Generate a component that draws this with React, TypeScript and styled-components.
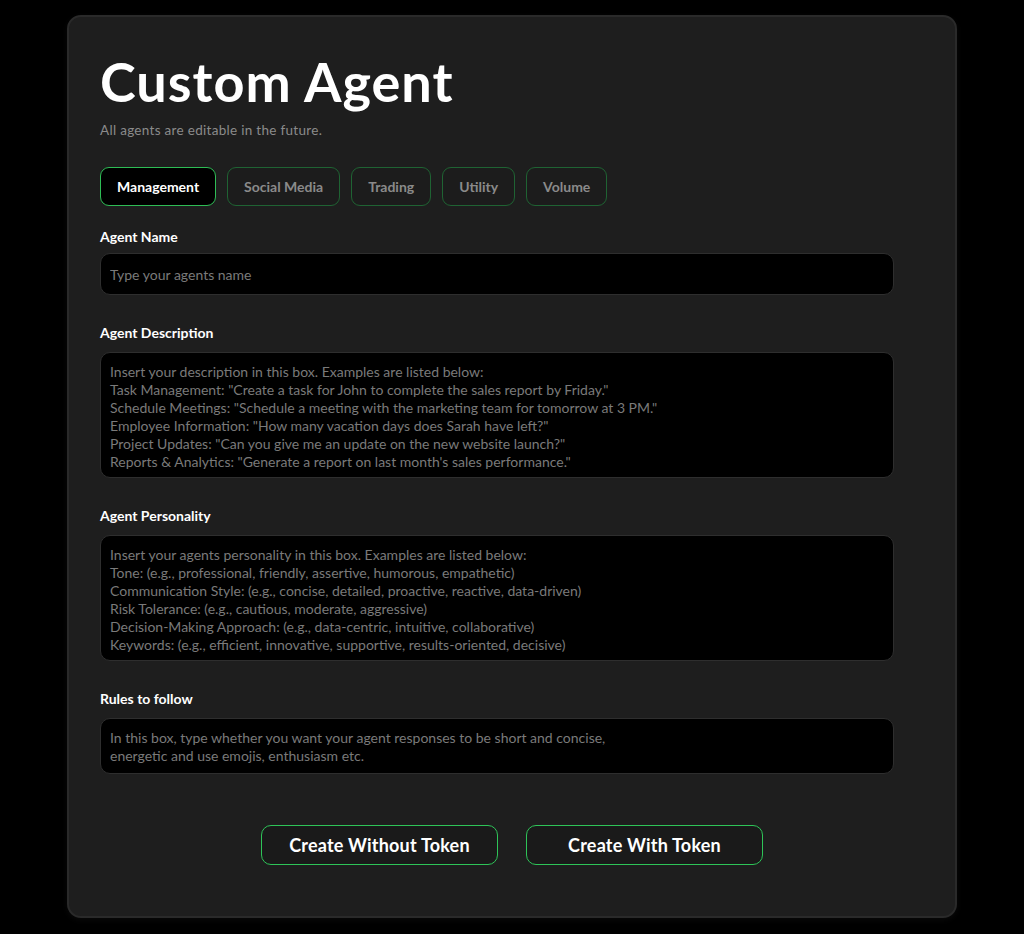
import React, { useState } from "react";
import styled, { createGlobalStyle } from "styled-components";

const Global = createGlobalStyle`
  html, body { margin: 0; padding: 0; background: #000; }
  body { font-family: "Lato", "Noto Sans", sans-serif; -webkit-font-smoothing: antialiased; }
  * { box-sizing: border-box; }
`;

const Page = styled.div`
  min-height: 934px;
  background: #000;
  padding: 15px 0 0 67px;
`;

const Card = styled.div`
  width: 890px;
  height: 903px;
  background: #1e1e1e;
  border: 2px solid #2a2a2a;
  border-radius: 14px;
  box-shadow: 0 2px 6px rgba(255, 255, 255, 0.04), 0 4px 10px rgba(0, 0, 0, 0.8);
  padding: 34px 62px 0 31px;
  display: flex;
  flex-direction: column;
`;

const Title = styled.h1`
  margin: 0;
  font-size: 54px;
  line-height: 62px;
  font-weight: 700;
  color: #fff;
  letter-spacing: 1px;
`;

const Subtitle = styled.p`
  margin: 9px 0 0;
  font-size: 13.5px;
  line-height: 16px;
  color: #8b8b8b;
  letter-spacing: 0.3px;
`;

const Tabs = styled.div`
  display: flex;
  gap: 11px;
  margin-top: 29px;
`;

const Tab = styled.button<{ $active?: boolean }>`
  height: 39px;
  padding: 0 16px;
  border-radius: 9px;
  border: 1.5px solid ${(p) => (p.$active ? "#2ebd55" : "#1f6333")};
  background: ${(p) => (p.$active ? "#000" : "#1c1c1c")};
  color: ${(p) => (p.$active ? "#fff" : "#8a8a8a")};
  font-family: "Lato", "Noto Sans", sans-serif;
  font-weight: 700;
  font-size: 14px;
  cursor: pointer;
`;

const Field = styled.div<{ $mt: number; $gap: number }>`
  display: flex;
  flex-direction: column;
  gap: ${(p) => p.$gap}px;
  margin-top: ${(p) => p.$mt}px;
`;

const Label = styled.label`
  font-size: 14px;
  line-height: 17px;
  font-weight: 700;
  color: #fff;
`;

const Input = styled.input`
  width: 794px;
  height: 42px;
  background: #000;
  border: 1px solid #2e2e2e;
  border-radius: 10px;
  padding: 0 9px;
  color: #ddd;
  font-family: "Lato", "Noto Sans", sans-serif;
  font-size: 14px;
  outline: none;
  &::placeholder { color: #7a7a7a; }
`;

const Area = styled.textarea<{ $h: number }>`
  width: 794px;
  height: ${(p) => p.$h}px;
  background: #000;
  border: 1px solid #2e2e2e;
  border-radius: 10px;
  padding: 10px 9px;
  color: #ddd;
  font-family: "Lato", "Noto Sans", sans-serif;
  font-size: 14px;
  line-height: 18px;
  resize: none;
  outline: none;
  overflow: hidden;
  &::placeholder { color: #7a7a7a; }
`;

const Actions = styled.div`
  display: flex;
  justify-content: center;
  gap: 28px;
  margin: 51px -31px 0 0;
`;

const ActionButton = styled.button`
  width: 237px;
  height: 40px;
  border-radius: 10px;
  border: 1.5px solid #2ec458;
  background: #1a1a1a;
  color: #fff;
  font-family: "Lato", "Noto Sans", sans-serif;
  font-weight: 700;
  font-size: 18px;
  letter-spacing: 0.2px;
  cursor: pointer;
`;

const tabs = ["Management", "Social Media", "Trading", "Utility", "Volume"];

const descPlaceholder = `Insert your description in this box. Examples are listed below:
Task Management: "Create a task for John to complete the sales report by Friday."
Schedule Meetings: "Schedule a meeting with the marketing team for tomorrow at 3 PM."
Employee Information: "How many vacation days does Sarah have left?"
Project Updates: "Can you give me an update on the new website launch?"
Reports & Analytics: "Generate a report on last month's sales performance."`;

const persPlaceholder = `Insert your agents personality in this box. Examples are listed below:
Tone: (e.g., professional, friendly, assertive, humorous, empathetic)
Communication Style: (e.g., concise, detailed, proactive, reactive, data-driven)
Risk Tolerance: (e.g., cautious, moderate, aggressive)
Decision-Making Approach: (e.g., data-centric, intuitive, collaborative)
Keywords: (e.g., efficient, innovative, supportive, results-oriented, decisive)`;

const rulesPlaceholder = `In this box, type whether you want your agent responses to be short and concise,
energetic and use emojis, enthusiasm etc.`;

export default function App() {
  const [active, setActive] = useState("Management");
  return (
    <Page>
      <Global />
      <Card>
        <Title>Custom Agent</Title>
        <Subtitle>All agents are editable in the future.</Subtitle>
        <Tabs>
          {tabs.map((t) => (
            <Tab key={t} $active={t === active} onClick={() => setActive(t)}>
              {t}
            </Tab>
          ))}
        </Tabs>
        <Field $mt={22} $gap={8}>
          <Label>Agent Name</Label>
          <Input placeholder="Type your agents name" />
        </Field>
        <Field $mt={29} $gap={11}>
          <Label>Agent Description</Label>
          <Area $h={126} placeholder={descPlaceholder} />
        </Field>
        <Field $mt={29} $gap={11}>
          <Label>Agent Personality</Label>
          <Area $h={126} placeholder={persPlaceholder} />
        </Field>
        <Field $mt={29} $gap={11}>
          <Label>Rules to follow</Label>
          <Area $h={56} placeholder={rulesPlaceholder} />
        </Field>
        <Actions>
          <ActionButton>Create Without Token</ActionButton>
          <ActionButton>Create With Token</ActionButton>
        </Actions>
      </Card>
    </Page>
  );
}
